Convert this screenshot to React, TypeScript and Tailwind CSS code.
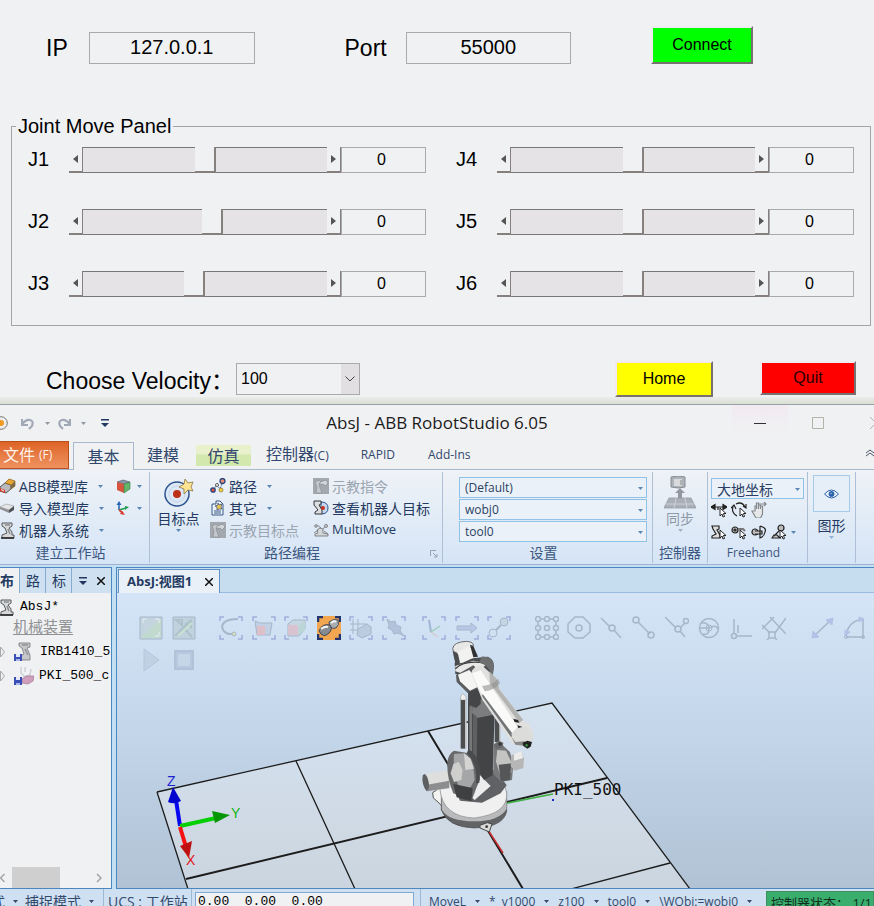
import React, { useState } from 'react';

const RIBBON_FONT = "font-['Open_Sans','Noto_Sans_CJK_SC',sans-serif]";

interface JointConfig {
  name: string;
  min: number;
  max: number;
}

const joints: JointConfig[] = [
  { name: 'J1', min: -170, max: 170 },
  { name: 'J4', min: -150, max: 150 },
  { name: 'J2', min: -75, max: 65 },
  { name: 'J5', min: -115, max: 115 },
  { name: 'J3', min: -65, max: 78 },
  { name: 'J6', min: -300, max: 300 },
];

/* ---------- Joint control panel ---------- */

const JointRow: React.FC<{ joint: JointConfig }> = ({ joint }) => {
  const [value, setValue] = useState(0);
  const step = (delta: number) =>
    setValue((v) => Math.min(joint.max, Math.max(joint.min, v + delta)));

  return (
    <div className="flex h-[26px] items-center">
      <label htmlFor={joint.name} className="w-[41px] shrink-0 self-start text-[20px] leading-6">
        {joint.name}
      </label>
      <button
        type="button"
        aria-label={`${joint.name} down`}
        onClick={() => step(-1)}
        className="flex h-[26px] w-[14px] shrink-0 items-center justify-center border-r border-b-2 border-[#85807e]"
      >
        <svg width="5" height="8" viewBox="0 0 5 8"><path d="M5 0v8L0 4z" fill="#555" /></svg>
      </button>
      <input
        id={joint.name}
        type="range"
        min={joint.min}
        max={joint.max}
        value={value}
        onChange={(e) => setValue(Number(e.target.value))}
        className="h-[26px] min-w-0 flex-1 appearance-none bg-[#e5e3e6] shadow-[inset_0_1px_#777,inset_0_-1px_#777] [&::-webkit-slider-thumb]:h-[26px] [&::-webkit-slider-thumb]:w-[21px] [&::-webkit-slider-thumb]:appearance-none [&::-webkit-slider-thumb]:border-r-2 [&::-webkit-slider-thumb]:border-b-2 [&::-webkit-slider-thumb]:border-[#85807e] [&::-webkit-slider-thumb]:bg-[#f0f1f3]"
      />
      <button
        type="button"
        aria-label={`${joint.name} up`}
        onClick={() => step(1)}
        className="flex h-[26px] w-[14px] shrink-0 items-center justify-center border-r border-b-2 border-[#85807e]"
      >
        <svg width="5" height="8" viewBox="0 0 5 8"><path d="M0 0v8l5-4z" fill="#555" /></svg>
      </button>
      <input
        aria-label={`${joint.name} angle`}
        value={value}
        onChange={(e) => setValue(Number(e.target.value) || 0)}
        className="h-[26px] w-[85px] shrink-0 border border-[#a8aaad] bg-transparent pr-1 text-center text-[16px]"
      />
    </div>
  );
};

const JointPanel: React.FC = () => {
  const [ip, setIp] = useState('127.0.0.1');
  const [port, setPort] = useState('55000');

  return (
    <section className="bg-[#f0f1f3] pt-[26px] font-['Liberation_Sans','Noto_Sans_CJK_SC',sans-serif] text-black">
      <div className="flex h-[38px] items-end pr-[121px] pl-[46px]">
        <label htmlFor="ip" className="w-[43px] shrink-0 text-[23px] leading-8">IP</label>
        <input
          id="ip"
          value={ip}
          onChange={(e) => setIp(e.target.value)}
          className="h-8 min-w-0 flex-1 border border-[#a8aaad] bg-transparent pb-[2px] text-center text-[20px]"
        />
        <label htmlFor="port" className="ml-[90px] w-[61px] shrink-0 text-[23px] leading-8">Port</label>
        <input
          id="port"
          value={port}
          onChange={(e) => setPort(e.target.value)}
          className="h-8 min-w-0 flex-1 border border-[#a8aaad] bg-transparent pb-[2px] text-center text-[20px]"
        />
        <button
          type="button"
          className="ml-20 h-[38px] w-[102px] shrink-0 border-2 border-t-[#f2eaf1] border-r-[#77726f] border-b-[#77726f] border-l-[#f2eaf1] bg-[#00ff00] text-[16px]"
        >
          Connect
        </button>
      </div>

      <fieldset className="mt-12 mr-[3px] ml-[11px] border border-[#a3a5a8] px-1">
        <legend className="px-[2px] text-[20px] leading-7">Joint Move Panel</legend>
        <div className="grid grid-cols-2 gap-x-[30px] gap-y-9 pt-[7px] pr-3 pb-[28px] pl-3">
          {joints.map((joint) => (
            <JointRow key={joint.name} joint={joint} />
          ))}
        </div>
      </fieldset>

      <div className="mt-[35px] flex h-9 items-center pr-[18px] pl-[46px]">
        <label htmlFor="velocity" className="w-[190px] shrink-0 self-end text-[23px] leading-8">
          Choose Velocity：
        </label>
        <div className="relative h-8 w-[124px]">
          <select
            id="velocity"
            defaultValue="100"
            className="block h-8 w-full appearance-none border border-[#a8aaad] bg-transparent pl-1 text-[16px]"
          >
            <option>50</option>
            <option>100</option>
            <option>200</option>
          </select>
          <span className="pointer-events-none absolute top-px right-px flex h-[30px] w-[18px] items-center justify-center bg-[#e2dfe2]">
            <svg width="10" height="6" viewBox="0 0 10 6" fill="none" stroke="#444"><path d="M.5.5 5 5 9.500.5" /></svg>
          </span>
        </div>
        <button
          type="button"
          className="ml-auto h-9 w-[98px] border-2 border-t-[#f2eaf1] border-r-[#77726f] border-b-[#77726f] border-l-[#f2eaf1] bg-[#ffff00] text-[16px]"
        >
          Home
        </button>
        <button
          type="button"
          className="ml-[47px] h-[34px] w-[96px] self-start border-2 border-t-[#f2eaf1] border-r-[#77726f] border-b-[#77726f] border-l-[#f2eaf1] bg-[#ff0000] text-[16px] text-[#2a0000]"
        >
          Quit
        </button>
      </div>
      <div className="h-[7px] bg-linear-to-b from-[#ebeceb] to-[#d8dfd2]" />
    </section>
  );
};

/* ---------- Icons ---------- */

const Caret: React.FC<{ className?: string }> = ({ className = 'text-[#5b86b5]' }) => (
  <svg width="5" height="3" viewBox="0 0 5 3" className={`shrink-0 ${className}`}>
    <path d="M0 0h5L2.500 3z" fill="currentColor" />
  </svg>
);

const LibraryIcon = () => (
  <svg width="16" height="16" viewBox="0 0 16 16">
    <path d="M0 9 5 5l6 2v4l-5 4-6-2z" fill="#b9babd" stroke="#555" />
    <path d="M5 5l4-4 6 2v5l-4 3V7z" fill="#e8a632" stroke="#865f1c" strokeWidth=".7" />
    <path d="M11 11V7l4-4v5z" fill="#7d6a45" />
    <path d="M0 10l5 2v3l-5-2z" fill="#d43324" />
    <path d="M1 11.500l3 1.500" stroke="#fff" />
  </svg>
);

const ImportIcon = () => (
  <svg width="16" height="14" viewBox="0 0 16 14">
    <path d="M0 6 6 3l8 2-5 4z" fill="#e5e6e8" stroke="#999" strokeWidth=".6" />
    <path d="M0 6v2l9 4V9z" fill="#8f9194" />
    <path d="M9 9v3l5-3V5z" fill="#505255" />
  </svg>
);

const ArmIcon = () => (
  <svg width="14" height="17" viewBox="0 0 14 17">
    <path d="M1 1h10v3l-3 2 3 4v3h2v3H1v-3l5-2-2-5-3-2z" fill="#d7d8da" stroke="#55585c" />
    <path d="M4 3h5M7 7l2 5" stroke="#8b8d90" strokeWidth="1.500" />
    <path d="M0 16h13" stroke="#222" strokeWidth="1.500" />
  </svg>
);

const CubeIcon = () => (
  <svg width="15" height="15" viewBox="0 0 15 15">
    <path d="M1 3 7 1l7 2-6 2z" fill="#8996a8" stroke="#495769" strokeWidth=".6" />
    <path d="M1 3v8l7 3V5z" fill="#d8543e" />
    <path d="M8 5v9l6-4V3z" fill="#64b46a" stroke="#387a44" strokeWidth=".6" />
  </svg>
);

const AxesIcon = () => (
  <svg width="13" height="15" viewBox="0 0 13 15" strokeWidth="1.600" fill="none">
    <path d="M3 9V3" stroke="#2e66b8" /><path d="M3 0 .5 4h5z" fill="#2e66b8" />
    <path d="M3 9l7-2" stroke="#1f9e4f" /><path d="m13 6-4-1v4z" fill="#1f9e4f" />
    <path d="M3 9l4 3" stroke="#d83a2d" /><path d="m9 14-3-4-2 3z" fill="#d83a2d" />
  </svg>
);

const TargetIcon = () => (
  <svg width="31" height="32" viewBox="0 0 31 32">
    <circle cx="14" cy="17" r="12" fill="#dce8f5" stroke="#2d5290" strokeWidth="1.500" />
    <circle cx="14" cy="17" r="8" fill="none" stroke="#c3d3e8" />
    <circle cx="14" cy="17" r="4" fill="#bd3018" />
    <path d="m22 2 3 4 5-1-2 5 2 4-5-1-4 4v-5l-5-2 5-3z" fill="#ffe493" stroke="#8a7440" strokeWidth=".8" />
  </svg>
);

const PathIcon = () => (
  <svg width="16" height="16" viewBox="0 0 16 16">
    <path d="M3 12 7 7l3 4 3-8" fill="none" stroke="#49659c" strokeDasharray="2 1" />
    <circle cx="3" cy="12" r="2.200" fill="#dd5544" stroke="#27457f" strokeWidth="1.300" />
    <circle cx="12.500" cy="3" r="2.500" fill="#e88a72" stroke="#27457f" strokeWidth="1.300" />
    <circle cx="7" cy="7" r="1.500" fill="#fff" stroke="#555" />
    <circle cx="11" cy="12" r="2" fill="#f3d34a" stroke="#876d1c" strokeWidth=".7" />
  </svg>
);

const OtherIcon = () => (
  <svg width="16" height="16" viewBox="0 0 16 16">
    <path d="M2 4v11h11V4l-3-3H6v3z" fill="#eaf1fa" stroke="#365887" />
    <path d="m8 3 1 2 3-1-1 3 1 2h-3l-2 1v-3L5 6l3-1z" fill="#f0cb52" stroke="#33436b" strokeWidth=".7" />
    <path d="M4 11h7M4 13h7" stroke="#365887" />
  </svg>
);

const TeachIcon = () => (
  <svg width="16" height="16" viewBox="0 0 16 16">
    <path d="M0 0h16v16H0z" fill="#a2a8ae" />
    <path d="M2 4l4-2 2 2-2 3 3 8H3l1-6z" fill="#c4c8cc" stroke="#8b9197" strokeWidth=".7" />
    <path d="M7 4l6-2 2 3-3 3-2-2-3 1z" fill="#d3d6d9" stroke="#858b91" strokeWidth=".7" />
  </svg>
);

const ViewTargetIcon = () => (
  <svg width="16" height="16" viewBox="0 0 16 16">
    <path d="M8 2q7 0 7 6t-7 6z" fill="#c5d8ef" stroke="#2a5394" />
    <path d="M1 1h7v3L6 5l3 5v4H2v-2l3-2-4-5z" fill="#dddee0" stroke="#34373b" />
    <circle cx="10" cy="8" r="2" fill="#c6321f" />
  </svg>
);

const MultiMoveIcon = () => (
  <svg width="16" height="14" viewBox="0 0 16 14" fill="#d4d5d7" stroke="#777b80" strokeWidth=".9">
    <path d="M2 13v-2l3-1-1-3 3-2 3 1v4l5 1v2zM4 2l4 3M14 1l-4 5" />
    <circle cx="3" cy="3" r="1.300" /><circle cx="13" cy="3" r="1.500" /><path d="M1 10l4-3M11 8l4 3" />
  </svg>
);

const SyncIcon = () => (
  <svg width="32" height="33" viewBox="0 0 32 33">
    <path d="M7 1q8-2 14 0v10q-6 2-14 0z" fill="#aeb3b9" stroke="#868c94" />
    <path d="M10 3h8v7h-8z" fill="#d8dadd" /><path d="M17 4v5" stroke="#888" />
    <path d="m16 12 5 5h-3v6h-4v-6h-3z" fill="#9398a0" />
    <path d="M5 22h22l5 10H0z" fill="#aab0b8" stroke="#8e949c" strokeWidth=".7" />
    <path d="M12 22l-2 10M21 22l2 10M2 28h28" stroke="#cdd1d5" />
  </svg>
);

const pointer = 'M9 6v8l2-2 1 3 1.500-.5-1-3H15z';

const FreehandIcon: React.FC<{ kind: string }> = ({ kind }) => (
  <svg width="16" height="16" viewBox="0 0 16 16" fill="none" stroke="#222" strokeWidth="1.200">
    {kind === 'linear' && <path d="M1 5h14M4 2.500V7.500L0 5zM12 2.500V7.500L16 5zM7 5v3" fill="#222" />}
    {kind === 'rotate' && <path d="M5 2q6-3 9 3M12 4l3 2V2M2 5q-2 5 4 9M0 6l3-3 2 4" />}
    {kind === 'hand' && (
      <g stroke="#85898e" fill="#e6e7e9">
        <path d="M4 9V4h1.500v3-6h2v6-4h2v4-3h2v8l-2 4H5L1 9z" /><path d="M8 2h7m-2-2 2 2-2 2" />
      </g>
    )}
    {kind === 'arm' && <path d="M1 2h7v3l-2 1 3 5v3H1v-2l4-2-3-5z" fill="#ddd" />}
    {kind === 'reorient' && <><circle cx="4" cy="6" r="3" fill="#bbb" /><circle cx="4" cy="6" r="1" /><path d="M7 5h5l2 2" strokeWidth="2" stroke="#777" /></>}
    {kind === 'circle' && <><circle cx="4" cy="8" r="3" fill="#bbb" /><path d="M4 7h7v3H4" fill="#ccc" /><path d="M9 2q7 2 5 6-1 5-5 6V2" /></>}
    {kind === 'multi' && <><circle cx="10" cy="4" r="3" fill="#bbb" /><path d="M8 7l-5 5M1 14h8l-3-3H3z" fill="#ccc" /></>}
    {kind !== 'hand' && kind !== 'circle' && <path d={pointer} fill="#fff" stroke="#111" strokeWidth=".9" />}
  </svg>
);

/* ---------- Ribbon ---------- */

const RibbonItem: React.FC<{
  icon: React.ReactNode;
  label: string;
  menu?: boolean;
  disabled?: boolean;
}> = ({ icon, label, menu, disabled }) => (
  <button
    type="button"
    disabled={disabled}
    className={`flex h-[22px] items-center whitespace-nowrap ${disabled ? 'text-[#9ba5b1]' : ''}`}
  >
    <span className="mr-[3px] flex w-4 shrink-0 justify-center">{icon}</span>
    {label}
    {menu && <Caret className="ml-[10px] text-[#5b86b5]" />}
  </button>
);

const Group: React.FC<{ title: string; className?: string; children: React.ReactNode }> = ({
  title,
  className = 'shrink-0',
  children,
}) => (
  <div className={`relative flex flex-col border-r border-[#aebfd6] pt-[3px] ${className}`}>
    <div className="flex h-[66px]">{children}</div>
    <div className="h-[22px] pr-2 text-center leading-6 text-[#3b5680]">{title}</div>
  </div>
);

const RibbonSelect: React.FC<{ label: string; options: string[]; className?: string }> = ({
  label,
  options,
  className = 'text-[12px]',
}) => (
  <div className="relative h-[21px] w-full">
    <select
      aria-label={label}
      className={`block h-[21px] w-full appearance-none border border-[#90c1e6] bg-[#eaf1f8] pl-[5px] text-[#2a3f63] ${className}`}
    >
      {options.map((option) => (
        <option key={option}>{option}</option>
      ))}
    </select>
    <Caret className="pointer-events-none absolute top-[10px] right-1 text-[#5b86b5]" />
  </div>
);

const TitleBar = () => (
  <header className="box-content flex h-9 items-center border-t border-[#98a0aa] bg-[#f0f1f3]">
    <div className="flex w-[142px] shrink-0 items-center overflow-hidden text-[#a0a9b5]">
      <svg width="8" height="14" viewBox="6 0 8 14">
        <circle cx="7" cy="7" r="6.300" fill="#eee" stroke="#777" /><circle cx="7" cy="7" r="3" fill="#f29b22" />
      </svg>
      <button type="button" aria-label="Undo" className="ml-[13px]">
        <svg width="14" height="13" viewBox="0 0 14 13"><path d="M1 2v6h6M1.500 7Q5 2 9 3t2 6l-3 3" fill="none" stroke="currentColor" strokeWidth="2.200" /></svg>
      </button>
      <Caret className="ml-[10px] text-[#9299a3]" />
      <button type="button" aria-label="Redo" className="ml-[7px]">
        <svg width="14" height="13" viewBox="0 0 14 13"><path d="M13 2v6H7M12.500 7Q9 2 5 3t-2 6l3 3" fill="none" stroke="currentColor" strokeWidth="2.200" /></svg>
      </button>
      <Caret className="ml-[10px] text-[#9299a3]" />
      <button type="button" aria-label="Customize toolbar" className="ml-[15px]">
        <svg width="8" height="8" viewBox="0 0 8 8" fill="#22375c"><path d="M0 0h8v1.500H0zM0 4h8L4 8z" /></svg>
      </button>
    </div>
    <h1 className="flex-1 text-center text-[17px] text-[#1b1b1b]">AbsJ - ABB RobotStudio 6.05</h1>
    <div className="flex h-full w-[142px] shrink-0 items-center overflow-hidden">
      <button type="button" aria-label="Minimize" className="flex h-7 w-[56px] shrink-0 items-center justify-center self-start bg-linear-to-b from-[#f1eaf1] to-[#f0f1f3] pt-[8px]">
        <svg width="12" height="1" viewBox="0 0 12 1"><path d="M0 0h12v1H0z" fill="#333" /></svg>
      </button>
      <button type="button" aria-label="Maximize" className="ml-[24px] shrink-0">
        <svg width="12" height="12" viewBox="0 0 12 12"><path d="M.5.5h11v11H.5z" fill="none" stroke="#b5b3a9" /></svg>
      </button>
      <button type="button" aria-label="Close" className="ml-[46px] shrink-0">
        <svg width="12" height="12" viewBox="0 0 12 12"><path d="m0 0 12 12M12 0 0 12" stroke="#b5b3a9" /></svg>
      </button>
    </div>
  </header>
);

const RibbonTabs = () => (
  <nav className="flex h-[29px] items-end border-b border-[#a9b8ca] bg-[#f0f1f3] text-[16px] text-[#31476d]">
    <button type="button" className="flex h-7 w-[69px] items-center border border-l-0 border-[#b9501c] bg-linear-to-b from-[#dd6424] to-[#ef9260] pl-[3px] whitespace-nowrap text-[#fff1e8]">
      文件<span className="ml-1 text-[12px]">(F)</span>
    </button>
    <button type="button" className="-mb-px ml-1 h-[28px] w-[61px] border border-b-0 border-[#a9b8ca] bg-[#f0f1f3] leading-6">
      基本
    </button>
    <button type="button" className="ml-[13px] h-7 leading-6">建模</button>
    <button type="button" className="mb-[3px] ml-[17px] h-[21px] w-[55px] bg-linear-to-b from-[#e9f0cc] from-40% to-[#d2e8ac] to-50% leading-5">
      仿真
    </button>
    <button type="button" className="ml-[15px] h-7 leading-6 whitespace-nowrap">
      控制器<span className="text-[12px]">(C)</span>
    </button>
    <button type="button" className="ml-8 h-7 text-[12px] leading-7">RAPID</button>
    <button type="button" className="ml-[33px] h-7 text-[12px] leading-7">Add-Ins</button>
    <button type="button" aria-label="Collapse ribbon" className="mb-[12px] ml-auto">
      <svg width="8" height="8" viewBox="0 0 8 8" fill="none" stroke="#4b5566"><path d="m0 4 4-3 4 3M0 7l4-3 4 3" /></svg>
    </button>
  </nav>
);

const Ribbon = () => (
  <div className="flex border-b border-[#9db4cc] bg-linear-to-b from-[#eff2f6] via-[#e2ecf7] to-[#d5e4f6] pt-[2px] pb-px text-[14px] text-[#243a61]">
    <Group title="建立工作站" className="w-[150px] shrink-0">
      <div className="w-[116px]">
        <RibbonItem icon={<LibraryIcon />} label="ABB模型库" menu />
        <RibbonItem icon={<ImportIcon />} label="导入模型库" menu />
        <RibbonItem icon={<ArmIcon />} label="机器人系统" menu />
      </div>
      <div>
        <button type="button" aria-label="Frame" className="flex h-[22px] items-center gap-[6px]"><CubeIcon /><Caret /></button>
        <button type="button" aria-label="Axes" className="flex h-[22px] items-center gap-[8px]"><AxesIcon /><Caret /></button>
      </div>
    </Group>
    <Group title="路径编程" className="w-[293px] shrink-0">
      <button type="button" className="mr-[3px] flex w-[57px] flex-col items-center pt-[2px]">
        <TargetIcon />
        <span className="leading-5">目标点</span>
        <Caret />
      </button>
      <div className="w-[103px]">
        <RibbonItem icon={<PathIcon />} label="路径" menu />
        <RibbonItem icon={<OtherIcon />} label="其它" menu />
        <RibbonItem icon={<TeachIcon />} label="示教目标点" disabled />
      </div>
      <div>
        <RibbonItem icon={<TeachIcon />} label="示教指令" disabled />
        <RibbonItem icon={<ViewTargetIcon />} label="查看机器人目标" />
        <button type="button" className="flex h-[22px] items-center text-[13px]">
          <span className="mr-[3px]"><MultiMoveIcon /></span>
          MultiMove
        </button>
      </div>
      <svg width="8" height="8" viewBox="0 0 8 8" className="absolute right-1 bottom-[5px]" fill="none" stroke="#9aa3ad">
        <path d="M.5 6V.5H6M3 3l4 4M7 4v3H4" />
      </svg>
    </Group>
    <Group title="设置" className="min-w-0 flex-1">
      <div className="flex w-full flex-col gap-px pt-[2px] pr-[5px] pl-4">
        <RibbonSelect label="Task" options={['(Default)']} />
        <RibbonSelect label="Work object" options={['wobj0']} />
        <RibbonSelect label="Tool" options={['tool0']} />
      </div>
    </Group>
    <div className="flex w-[55px] shrink-0 flex-col border-r border-[#aebfd6] pt-[3px]">
      <button type="button" disabled className="flex h-[66px] flex-col items-center pt-px text-[#8e99a8]">
        <SyncIcon />
        <span className="leading-5">同步</span>
        <Caret className="text-[#a3b3c5]" />
      </button>
      <div className="h-[22px] text-center leading-6 text-[#3b5680]">控制器</div>
    </div>
    <Group title="Freehand" className="w-[100px] shrink-0 text-[12px]">
      <div className="w-full px-[3px] pt-[3px]">
        <RibbonSelect label="Coordinate system" options={['大地坐标']} className="text-[14px]" />
        <div className="flex h-[22px] items-center gap-1">
          <FreehandIcon kind="linear" />
          <FreehandIcon kind="rotate" />
          <FreehandIcon kind="hand" />
        </div>
        <div className="flex h-[22px] items-center gap-1">
          <FreehandIcon kind="arm" />
          <FreehandIcon kind="reorient" />
          <FreehandIcon kind="circle" />
          <FreehandIcon kind="multi" />
          <Caret />
        </div>
      </div>
    </Group>
    <div className="flex w-12 shrink-0 flex-col items-center border-r border-[#aebfd6] pt-[3px]">
      <button type="button" aria-label="Graphics" className="flex h-[37px] w-[37px] items-center justify-center border border-[#a6cbe9] bg-[#e6eff8]">
        <svg width="15" height="10" viewBox="0 0 15 10" fill="none" stroke="#2d64ab">
          <path d="M.5 5q7-8 14 0-7 8-14 0z" /><circle cx="7.500" cy="5" r="2.500" fill="#2d64ab" /><circle cx="7" cy="4.500" r=".6" fill="#fff" stroke="none" />
        </svg>
      </button>
      <span className="mt-1 leading-5">图形</span>
      <Caret className="text-[#8fb2d6]" />
    </div>
    <div className="w-[18px] shrink-0" />
  </div>
);

/* ---------- Station tree ---------- */

const SmallRobot = () => (
  <svg width="18" height="20" viewBox="0 0 18 20">
    <path d="M5 1h11v4l-3 1 3 7v5H6v-4l4-2-2-6-3-2z" fill="#c6c7ca" stroke="#777" strokeWidth=".8" />
    <path d="M8 3h6M11 7l3 6" stroke="#909296" strokeWidth="1.500" />
    <path d="M0 12h8v7H0z" fill="#3a4fb5" /><path d="M2 12h4v3H2z" fill="#e4e8f8" /><path d="M2 17h4v2H2z" fill="#aab4e6" />
  </svg>
);

const ToolIcon = () => (
  <svg width="20" height="20" viewBox="0 0 20 20">
    <path d="M7 1v6l4 4 5-2 1-6M11 1v5" fill="none" stroke="#cdd1d8" strokeWidth="1.500" />
    <path d="M8 13l4-3h8l-1 5-5 3-6-1z" fill="#cf9fbc" stroke="#a47896" strokeWidth=".7" />
    <path d="M0 11h8v8H0z" fill="#3a4fb5" /><path d="M2 11h4v3H2z" fill="#e4e8f8" /><path d="M2 17h4v2H2z" fill="#aab4e6" />
  </svg>
);

const Expander = () => (
  <svg width="5" height="10" viewBox="0 0 5 10" className="shrink-0"><path d="M.5 0v10L4.500 5z" fill="none" stroke="#a9a9a9" /></svg>
);

const TreePane = () => (
  <aside className="flex w-[112px] shrink-0 flex-col overflow-hidden border-y border-r border-[#4d87bf] bg-[#f0f1f3]">
    <div className="flex h-[25px] shrink-0 items-center bg-[#cfe0f1] text-[14px] text-[#243a61]">
      <button type="button" className="h-full w-[19px] bg-[#f0f1f3] pr-[5px] font-bold">布</button>
      <button type="button" className="h-full w-[27px] border-x border-[#86acd2] pl-px">路</button>
      <button type="button" className="h-full w-[26px] border-r border-[#86acd2] pl-px">标</button>
      <button type="button" aria-label="Pane menu" className="ml-[7px]">
        <svg width="8" height="8" viewBox="0 0 8 8" fill="#22375c"><path d="M0 0h8v1.500H0zM0 4h8L4 8z" /></svg>
      </button>
      <button type="button" aria-label="Close pane" className="ml-[10px]">
        <svg width="8" height="8" viewBox="0 0 8 8" stroke="#111" strokeWidth="1.500"><path d="m0 0 8 8M8 0 0 8" /></svg>
      </button>
    </div>
    <ul className="mr-px flex-1 overflow-hidden pt-[3px] font-['Liberation_Mono','Noto_Sans_CJK_SC',monospace] text-[13px] whitespace-nowrap text-black">
      <li className="flex h-[22px] items-center gap-[6px]"><ArmIcon />AbsJ*</li>
      <li className="h-[22px] pl-[13px] text-[15px] leading-[22px] text-[#8f9194] underline underline-offset-2">机械装置</li>
      <li className="flex h-6 items-center"><Expander /><span className="mr-2 ml-[9px] shrink-0"><SmallRobot /></span>IRB1410_5</li>
      <li className="flex h-6 items-center"><Expander /><span className="mr-[5px] ml-[9px] shrink-0"><ToolIcon /></span>PKI_500_c</li>
    </ul>
    <div className="flex h-[21px] shrink-0 items-center text-[#a5a5a5]">
      <svg width="5" height="10" viewBox="0 0 5 10" fill="none" stroke="currentColor" strokeWidth="1.500"><path d="M4.500 1 .5 5l4 4" /></svg>
      <div className="ml-[7px] h-full w-12 bg-[#cfcfd0]" />
      <svg width="6" height="10" viewBox="0 0 6 10" fill="none" stroke="currentColor" strokeWidth="1.500" className="ml-[36px]"><path d="m1 1 4 4-4 4" /></svg>
    </div>
  </aside>
);

/* ---------- 3D view ---------- */

const corners = 'M1 5V1h4M19 1h4v4M23 19v4h-4M5 23H1v-4';

interface Tool {
  id: string;
  art: React.ReactNode;
  active?: boolean;
}

const selectionTools: Tool[] = [
  { id: 'Curve', art: <><path d="M19 3Q4 3 3 11q2 8 11 7" strokeWidth="2" /><circle cx="15" cy="18" r="2" fill="#dfdca0" /></> },
  { id: 'Surface', art: <><path d="M3 5 8 7h12l-2 12H5z" fill="#bccbdf" /><path d="M5 10h8v9H5z" fill="#e2b4bc" stroke="none" /></> },
  { id: 'Body', art: <><path d="M4 8 9 4h12v9l-6 7H4z" fill="#c3d2dd" /><path d="M4 9h10v10H4z" fill="#dcb9c5" stroke="none" /><path d="M15 9l6-4v9l-6 5z" fill="#b3d2cc" stroke="none" /></> },
  {
    id: 'Part',
    active: true,
    art: (
      <>
        <path d="M0 0h24v24H0z" fill="#f3a650" stroke="none" />
        <path d="M1 6V1h5M18 1h5v5M23 18v5h-5M6 23H1v-5" stroke="#24346c" strokeWidth="2.500" />
        <path d="M12 6q5-4 9-2 2 5-2 8-7 2-7-6z" fill="#a9adb2" stroke="#4c5057" />
        <path d="M2 15q3-8 11-6 3 4-1 8-6 6-10-2z" fill="#878c93" stroke="#41454c" />
        <path d="M4 13q4-3 7-2M14 7q3-3 5-1" stroke="#f5f6f7" strokeWidth="2" />
      </>
    ),
  },
  { id: 'Mechanism', art: <><path d="M4 3v15M9 3v15M1 8h17M1 14h10" /><path d="M9 13l9-5 4 3v7l-9 4-5-3z" fill="#b4c4da" /></> },
  { id: 'Group', art: <path d="m5 3 4 3 4-1 1 4 5 2-1 4 4 5-6-3-4 1-2-4-4-2 1-3z" fill="#a8b9d5" /> },
];

const frameTools: Tool[] = [
  { id: 'Target', art: <><path d="M7 4l2 12" stroke="#8fa9cb" strokeWidth="2" /><path d="M9 16 18 10" stroke="#8fc9a8" strokeWidth="1.500" /><path d="M9 16l7 5" stroke="#dcb1a8" /></> },
  { id: 'Move', art: <path d="M2 10h14V7l6 5-6 5v-3H2z" fill="#afc0e3" /> },
  { id: 'Path', art: <><circle cx="17" cy="6" r="4" fill="#c2d0de" /><circle cx="6" cy="17" r="4" /><path d="M9 14l5-5" strokeWidth="2" /></> },
];

const snapTools: Tool[] = [
  {
    id: 'Snap object',
    art: (
      <>
        <path d="M3 3h18v18H3z" strokeWidth="1.500" />
        {[3, 12, 21].map((x) =>
          [3, 12, 21].map((y) => <circle key={`${x}-${y}`} cx={x} cy={y} r="2.500" fill="#d5e3f3" strokeWidth="1.500" />),
        )}
      </>
    ),
  },
  { id: 'Snap center', art: <><path d="M8 1h8l7 7v8l-7 6H8l-7-6V8z" strokeWidth="1.500" /><circle cx="12" cy="12" r="3" strokeWidth="1.500" /></> },
  { id: 'Snap mid', art: <><path d="M1 2l9 9M14 14l7 8" strokeWidth="1.500" /><circle cx="12" cy="12" r="3" strokeWidth="1.500" /></> },
  { id: 'Snap end', art: <><path d="M6 6l12 12" strokeWidth="1.500" /><circle cx="4" cy="4" r="3" strokeWidth="1.500" /><circle cx="19" cy="19" r="3" strokeWidth="1.500" /></> },
  { id: 'Snap edge', art: <><path d="M0 1l11 11M15 15l5 6M16 11l4-4" strokeWidth="1.500" /><circle cx="13" cy="13" r="3" strokeWidth="1.500" /><circle cx="21" cy="5" r="2.500" strokeWidth="1.500" /></> },
  { id: 'Snap gravity', art: <><circle cx="12" cy="12" r="9.500" strokeWidth="1.500" /><path d="M4 7q7-1 8 5 0 8-6 6M12 12q7-4 9 1M12 12H3" strokeWidth="1.500" /><circle cx="12" cy="12" r="3" /></> },
  { id: 'Snap local', art: <><path d="M4 3v15M7 20h15M8 17V9" strokeWidth="1.500" /><circle cx="4" cy="20" r="2.500" strokeWidth="1.500" /></> },
  { id: 'Snap grid', art: <><path d="M0 9l8 8M13 22l2 2M8 1l16 17M0 13 12 1M13 17 24 2M7 22l-2 2" strokeWidth="1.500" /><path d="M7 16h6v6H7z" strokeWidth="1.500" /></> },
];

const measureTools: Tool[] = [
  { id: 'Measure distance', art: <><path d="M3 21 22 3" strokeWidth="1.500" /><path d="m2 22 1-7 6 6zM23 2l-7 2 6 5z" fill="#a9b9e4" stroke="#a9b9e4" /></> },
  { id: 'Measure angle', art: <><path d="M3 20Q5 5 20 3v18H3M3 21h18" strokeWidth="1.500" /><path d="m2 20 0-6 5 2zM21 3l-5-2v5z" fill="#a9b9e4" stroke="#a9b9e4" /><circle cx="3" cy="21" r="1.500" /><circle cx="20" cy="21" r="1.500" /></> },
];

const ViewTool: React.FC<{ id: string; framed?: boolean; active?: boolean; children: React.ReactNode }> = ({
  id,
  framed,
  active,
  children,
}) => (
  <button
    type="button"
    aria-label={id}
    title={id}
    className={`h-6 w-6 shrink-0 ${active ? '' : 'opacity-75'}`}
  >
    <svg width="24" height="24" viewBox="0 0 24 24" fill="none" stroke="#99a8be">
      {framed && <path d={corners} stroke="#8e9dd3" strokeWidth="1.500" />}
      {children}
    </svg>
  </button>
);

const ViewToolbar = () => (
  <div className="relative overflow-hidden pt-[23px] pl-[22px]">
    <div className="flex">
      <div className="flex w-[57px] shrink-0 justify-between">
        <ViewTool id="View all">
          <path d="M1 1h22v22H1z" fill="#bfd0d8" /><path d="M1 22 22 2v20z" fill="#bdd8c4" stroke="none" /><path d="M4 7V3h4M16 3h4v4M20 16v4h-4" stroke="#e9f1f5" />
        </ViewTool>
        <ViewTool id="View center">
          <path d="M1 1h22v22H1z" fill="#bccdd8" /><path d="M3 20 19 4M12 12l8 9M4 4l6 5V4zM19 5v6l-5-3z" stroke="#a1b8bd" strokeWidth="2" /><path d="M6 20 20 7" stroke="#c6e3c5" strokeWidth="2" />
        </ViewTool>
      </div>
      <div className="ml-[23px] flex w-[187px] shrink-0 justify-between">
        {selectionTools.map(({ id, art, active }) => (
          <ViewTool key={id} id={id} active={active} framed={!active}>{art}</ViewTool>
        ))}
      </div>
      <div className="ml-4 flex w-[89px] shrink-0 justify-between">
        {frameTools.map(({ id, art }) => (
          <ViewTool key={id} id={id} framed>{art}</ViewTool>
        ))}
      </div>
      <div className="ml-6 flex w-[251px] shrink-0 justify-between">
        {snapTools.map(({ id, art }) => (
          <ViewTool key={id} id={id}>{art}</ViewTool>
        ))}
      </div>
      <div className="ml-6 flex w-[57px] shrink-0 justify-between">
        {measureTools.map(({ id, art }) => (
          <ViewTool key={id} id={id}>{art}</ViewTool>
        ))}
      </div>
    </div>
    <div className="mt-2 flex w-[57px] justify-between">
      <ViewTool id="Play"><path d="M5 1v22l15-11z" fill="#bccde1" stroke="#aebfd6" /></ViewTool>
      <ViewTool id="Stop"><path d="M3 3h18v18H3z" fill="#b1c2d8" stroke="#a8bad1" strokeWidth="2" /><path d="M6 6h12v12H6z" fill="#c4d4e6" stroke="none" /></ViewTool>
    </div>
  </div>
);

const Robot = () => (
  <g transform="translate(400 630) scale(.3333)" strokeLinejoin="round">
    {/* base */}
    <path d="M98 488l22-14 20 70-26-28-14-12z" fill="#f3f3f2" stroke="#555" strokeWidth="3" />
    <path d="M124 470v70q20 52 98 54 88-2 98-50v-60z" fill="#626365" stroke="#48494b" strokeWidth="2" />
    <path d="M126 540q20 34 96 34t98-38v-56H124z" fill="#b9babb" />
    <path d="M120 480q6-34 60-44h88q48 12 52 54 4 62-98 74-92-4-102-84z" fill="#eff0ef" stroke="#8b8c8e" strokeWidth="2" />
    <path d="M240 586l22-8 14 4-8 24-28-12z" fill="#d8d8d6" stroke="#47484a" strokeWidth="3" />
    <circle cx="260" cy="590" r="4" fill="#333" />
    <path d="M158 464l50-44h80l32 46-18 24-56 28-66-6z" fill="#606164" />
    <path d="M196 486l44-50 32 32-48 42z" fill="#ecedec" />
    {/* left motor */}
    <path d="M76 432l72-12v56l-66 8z" fill="#dededd" />
    <path d="M82 464l66-12v22l-66 10z" fill="#8c8d8f" />
    <path d="M68 436q-4 28 12 48 10-8 6-28-4-20-12-24z" fill="#5e5f61" />
    {/* lower arm */}
    <path d="M204 190h66l14 60-6 186-26 14-48-80z" fill="#434446" />
    <path d="M218 208h62v46l-48 10-16-14z" fill="#7c7d7f" />
    <path d="M208 214h8v150h-8z" fill="#77787a" />
    <path d="M218 250l14 12-2 160-12-50z" fill="#5f6062" />
    <path d="M182 206h14v150h-14z" fill="#4c4d4f" /><path d="M195 206h5v150h-5z" fill="#c2c2c2" />
    <path d="M182 200l6-10 10 10v10h-16z" fill="#eeeeed" stroke="#777" />
    <path d="M284 230h14v106h-14z" fill="#4c4d4f" /><path d="M297 250h4v84h-4z" fill="#aaa" />
    {/* shoulder discs */}
    <path d="M142 396q4-26 20-34l36 6q40 16 42 80l-10 24-16 42-54-24q-20-46-18-94z" fill="#68696b" />
    <path d="M162 372l30-2q28 12 32 80l-16 28-30-8q-20-30-16-98z" fill="#a5a6a7" />
    <path d="M160 402l16-6 12 24-4 30-22 6-10-26z" fill="#cfcfce" />
    <path d="M192 370l20 16 10 30-26 4z" fill="#d4d4d2" />
    <path d="M160 462l58 12-4 40-44-12z" fill="#3f4042" />
    <path d="M206 358q30 20 34 60l-2 40-10 2q6-60-28-90z" fill="#4a4b4d" />
    <path d="M280 350l24-8 26 24 10 40-4 44-32 6-24-24z" fill="#77787a" />
    <path d="M292 360l26 2 16 34v32l-34 6-12-40z" fill="#c4c4c3" />
    <path d="M296 404l38-4-4 50-28 4z" fill="#555658" />
    <path d="M334 376l30-10 8 18-2 30-26 8-12-14z" fill="#b6b6b6" />
    <path d="M342 372l22-8 6 20-28 8z" fill="#ececeb" />
    <path d="M280 344l16-12 14 6-2 14-20 6z" fill="#68696b" /><circle cx="300" cy="342" r="5" fill="#333" />
    {/* wrist housing */}
    <path d="M164 100q0-16 40-14l60-6q18 8 18 30l-6 30-40 12-70-20z" fill="#4b4c4e" />
    <path d="M166 108l54-16 44 8-20 16-60 14-18-6z" fill="#e8e8e7" />
    <path d="M168 136l52-30 40 40-18 60-34 26-4-42-34-34z" fill="#5a5b5d" />
    <path d="M174 134l34-14 36 46-34 16-30-28z" fill="#f4f4f3" />
    <path d="M206 186l36-14v50l-14 12-22-10z" fill="#454648" />
    <path d="M158 56q2-20 42-22 22 2 20 14l-40 22q-20 0-22-14z" fill="#e7e7e6" stroke="#696a6c" strokeWidth="3" />
    <path d="M172 66l38-18 14 34-36 16-12 2z" fill="#f2f2f1" />
    <path d="M158 62l16 10 6 26-12 6-6-20z" fill="#4a4b4d" /><path d="M210 44l10 4 14 32-14 2z" fill="#303133" />
    <path d="M166 116q30-28 92-16" fill="none" stroke="#3b3c3e" strokeWidth="4" />
    <path d="M244 80q36-4 38 30l-4 30q-14-38-40-42z" fill="#6d6e6f" />
    {/* upper arm */}
    <path d="M214 128q8-24 34-20l42 38 10 32 72 94q28 16 28 44l-8 26-20 8-34-8-92-134z" fill="#e0e0df" />
    <path d="M216 130l26-10 110 170-14 20-92-114z" fill="#fafaf9" />
    <path d="M268 124l22 22 8 32 72 92-12 8-88-118z" fill="#b4b4b3" />
    <path d="M246 168q30-2 48-22l6 14q-18 22-46 24z" fill="#8f908f" opacity=".6" />
    <path d="M246 198l88 124 4-10-90-120z" fill="#737476" />
    <path d="M340 266l14 4 4 8-14-2zM352 286l14 4 2 8-12-2z" fill="#252628" />
    <path d="M334 312q14-22 42-22l22 14 2 22-16 18-40-4z" fill="#dcdcdb" />
    <path d="M334 320l12 16 28-2 2 14-30-4z" fill="#88898a" />
    <path d="M368 338l14-6 14 4-4 14-10 6-12-8z" fill="#20221f" /><circle cx="380" cy="346" r="4" fill="#3a8846" />
  </g>
);

const Scene = () => (
  <svg
    className="absolute inset-0 h-full w-full"
    viewBox="117 593 757 295"
    preserveAspectRatio="xMinYMin slice"
    fill="none"
  >
    <defs>
      <linearGradient id="floor" x1="0" y1="0" x2="0" y2="1">
        <stop offset="0" stopColor="#d5e2f0" />
        <stop offset="1" stopColor="#cbd5df" />
      </linearGradient>
    </defs>
    <path d="M157 792 552 703 690 889H188z" fill="url(#floor)" />
    <g stroke="#1c1c1c">
      <path d="M157 792 552 703 690 889M157 792l31 97" strokeWidth="1.300" />
      <path d="M296 761l59 128M670 863l-99 26" strokeWidth="1.300" />
      <path d="M186 879 607 778M428 731l95 158" strokeWidth="2" />
    </g>
    <path d="M487 807 553 794" stroke="#3fae45" strokeWidth="1.500" />
    <path d="M488 830l15 23" stroke="#c52d2d" strokeWidth="1.500" />
    <Robot />
    <text x="554" y="795" fill="#111" className="font-['DejaVu_Sans_Mono',monospace] text-[16px]">PKI_500</text>
    <path d="M552 800h2" stroke="#1d28c8" strokeWidth="2" />
    {/* axis triad */}
    <path d="M180 826l-4-26" stroke="#0505ef" strokeWidth="4" />
    <path d="m173 787-5 15q6 3 13-1z" fill="#0202cf" />
    <path d="M180 826l36-8" stroke="#06cf06" strokeWidth="4" />
    <path d="m230 815-18-4 3 12z" fill="#049604" />
    <path d="M180 827l6 20" stroke="#f51111" strokeWidth="4" />
    <path d="m189 858-9-12 12-5z" fill="#bf1111" />
    <g className="font-['Liberation_Sans',sans-serif] text-[14px]">
      <text x="167" y="786" fill="#2222d0">Z</text>
      <text x="231" y="818" fill="#11b511">Y</text>
      <text x="186" y="865" fill="#e01515">X</text>
    </g>
  </svg>
);

const ViewPane = () => (
  <main className="ml-[4px] min-w-0 flex-1 border-y border-l border-[#4d87bf]">
    <div className="flex h-[25px] items-end border-b border-[#9bbce0] bg-[#c6dcef] pl-px">
      <div className="-mb-px flex h-6 w-[102px] items-center border border-b-0 border-[#5d91c4] bg-[#e9f0f8] pl-2 text-[13px] font-bold whitespace-nowrap text-[#243a61]">
        AbsJ:视图1
        <button type="button" aria-label="Close view" className="mr-[6px] ml-auto">
          <svg width="8" height="8" viewBox="0 0 8 8" stroke="#111" strokeWidth="1.500"><path d="m0 0 8 8M8 0 0 8" /></svg>
        </button>
      </div>
    </div>
    <div className="relative h-[295px] bg-linear-to-b from-[#d5e5f7] via-[#c2d5e9] to-[#b0c2d4]">
      <Scene />
      <ViewToolbar />
    </div>
  </main>
);

/* ---------- Status bar ---------- */

const StatusBar = () => (
  <footer className="flex h-[17px] items-start overflow-hidden bg-[#cfe0f2] text-[12px] leading-[26px] whitespace-nowrap text-[#33496c]">
    <div className="flex h-full w-[104px] shrink-0 items-start border-r border-[#9cb9d8] text-[14px]">
      <span className="w-[5px] overflow-hidden [direction:rtl]">式</span>
      <Caret className="mt-[11px] ml-2 text-[#33496c]" />
      <span className="ml-[7px]">捕捉模式</span>
      <Caret className="mt-[11px] ml-2 text-[#33496c]" />
    </div>
    <div className="h-full w-[88px] shrink-0 border-r border-[#9cb9d8] pl-1 text-[14px]">UCS : 工作站</div>
    <input
      aria-label="UCS position"
      defaultValue="0.00  0.00  0.00"
      className="mt-[3px] ml-[3px] h-[20px] w-[219px] shrink-0 border border-[#7fa9d6] bg-[#f0f1f3] pl-[2px] font-['Liberation_Mono',monospace] text-[13px] text-black"
    />
    <div className="ml-[6px] flex h-full min-w-0 flex-1 items-start gap-[9px] border-l border-[#9cb9d8] pl-2">
      <span>MoveL</span><Caret className="mt-[11px] text-[#33496c]" />
      <span>* &nbsp;v1000</span><Caret className="mt-[11px] text-[#33496c]" />
      <span>z100</span><Caret className="mt-[11px] text-[#33496c]" />
      <span>tool0</span><Caret className="mt-[11px] text-[#33496c]" />
      <span>\WObj:=wobj0</span><Caret className="mt-[11px] text-[#33496c]" />
    </div>
    <div className="mt-[2px] h-full w-[108px] shrink-0 overflow-hidden border border-[#3f8f63] bg-[#3aaf6d] pl-1 text-[13px] leading-[23px] text-[#10301f]">
      控制器状态：&nbsp;1/1
    </div>
  </footer>
);

export default function App() {
  return (
    <div className="w-full overflow-hidden bg-[#f0f1f3]">
      <JointPanel />
      <div className={RIBBON_FONT}>
        <TitleBar />
        <RibbonTabs />
        <Ribbon />
        <div className="flex bg-[#c3dff3] pt-[2px]">
          <TreePane />
          <ViewPane />
        </div>
        <StatusBar />
      </div>
    </div>
  );
}
